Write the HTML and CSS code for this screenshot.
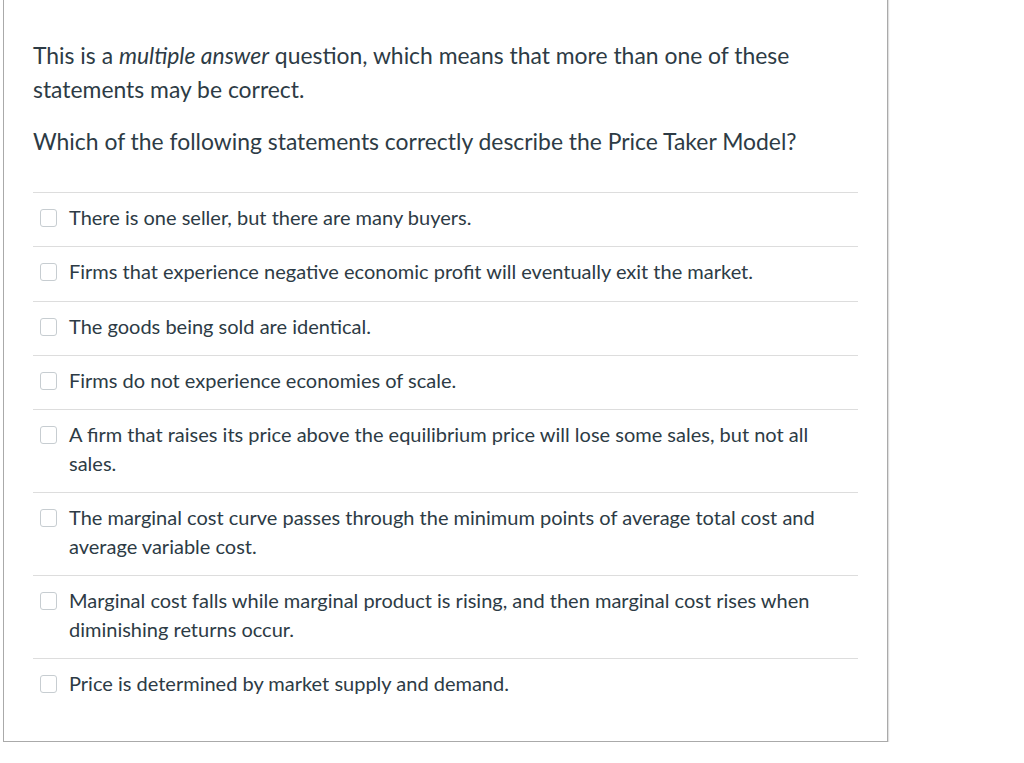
FILE: index.html
```html
<!DOCTYPE html>
<html>
<head>
<meta charset="utf-8">
<link rel="stylesheet" href="styles.css">
</head>
<body>
<div class="question">
  <div class="question-text">
    <p>This is a <em>multiple answer</em> question, which means that more than one of these statements may be correct.</p>
    <p>Which of the following statements correctly describe the Price Taker Model?</p>
  </div>
  <div class="answers">
    <label class="answer"><span class="box"></span><span class="label">There is one seller, but there are many buyers.</span></label>
    <label class="answer"><span class="box"></span><span class="label">Firms that experience negative economic profit will eventually exit the market.</span></label>
    <label class="answer"><span class="box"></span><span class="label">The goods being sold are identical.</span></label>
    <label class="answer"><span class="box"></span><span class="label">Firms do not experience economies of scale.</span></label>
    <label class="answer"><span class="box"></span><span class="label">A firm that raises its price above the equilibrium price will lose some sales, but not all sales.</span></label>
    <label class="answer"><span class="box"></span><span class="label">The marginal cost curve passes through the minimum points of average total cost and average variable cost.</span></label>
    <label class="answer"><span class="box"></span><span class="label">Marginal cost falls while marginal product is rising, and then marginal cost rises when diminishing returns occur.</span></label>
    <label class="answer"><span class="box"></span><span class="label">Price is determined by market supply and demand.</span></label>
  </div>
</div>
</body>
</html>
```
FILE: styles.css
```css
html, body {
  margin: 0;
  padding: 0;
  background: #fff;
}
body {
  font-family: Lato, "Liberation Sans", sans-serif;
  color: #2d3b45;
}
.question {
  margin: -1px 0 0 3px;
  width: 885px;
  height: 743px;
  border: 1px solid #aaa;
  box-shadow: 1px 1px 1px rgba(0,0,0,0.12);
  padding: 0 29px;
  box-sizing: border-box;
}
.question-text {
  padding-top: 37.5px;
  font-size: 22.9px;
  line-height: 34px;
  color: #2d3b45;
}
.question-text p {
  margin: 0 0 18px 0;
}
.question-text p:last-child {
  margin-bottom: 0;
}
.answers {
  margin-top: 34.5px;
}
.answer {
  display: flex;
  align-items: flex-start;
  border-top: 1px solid #ddd;
  padding: 10px 0 14.5px 0;
  font-size: 20px;
  line-height: 28.75px;
}
.box {
  flex: none;
  width: 15px;
  height: 16px;
  margin: 6px 12px 0 7px;
  border: 1px solid #c7cdd1;
  border-radius: 3px;
  background: #fff;
}
.label {
  flex: 1;
}
```
